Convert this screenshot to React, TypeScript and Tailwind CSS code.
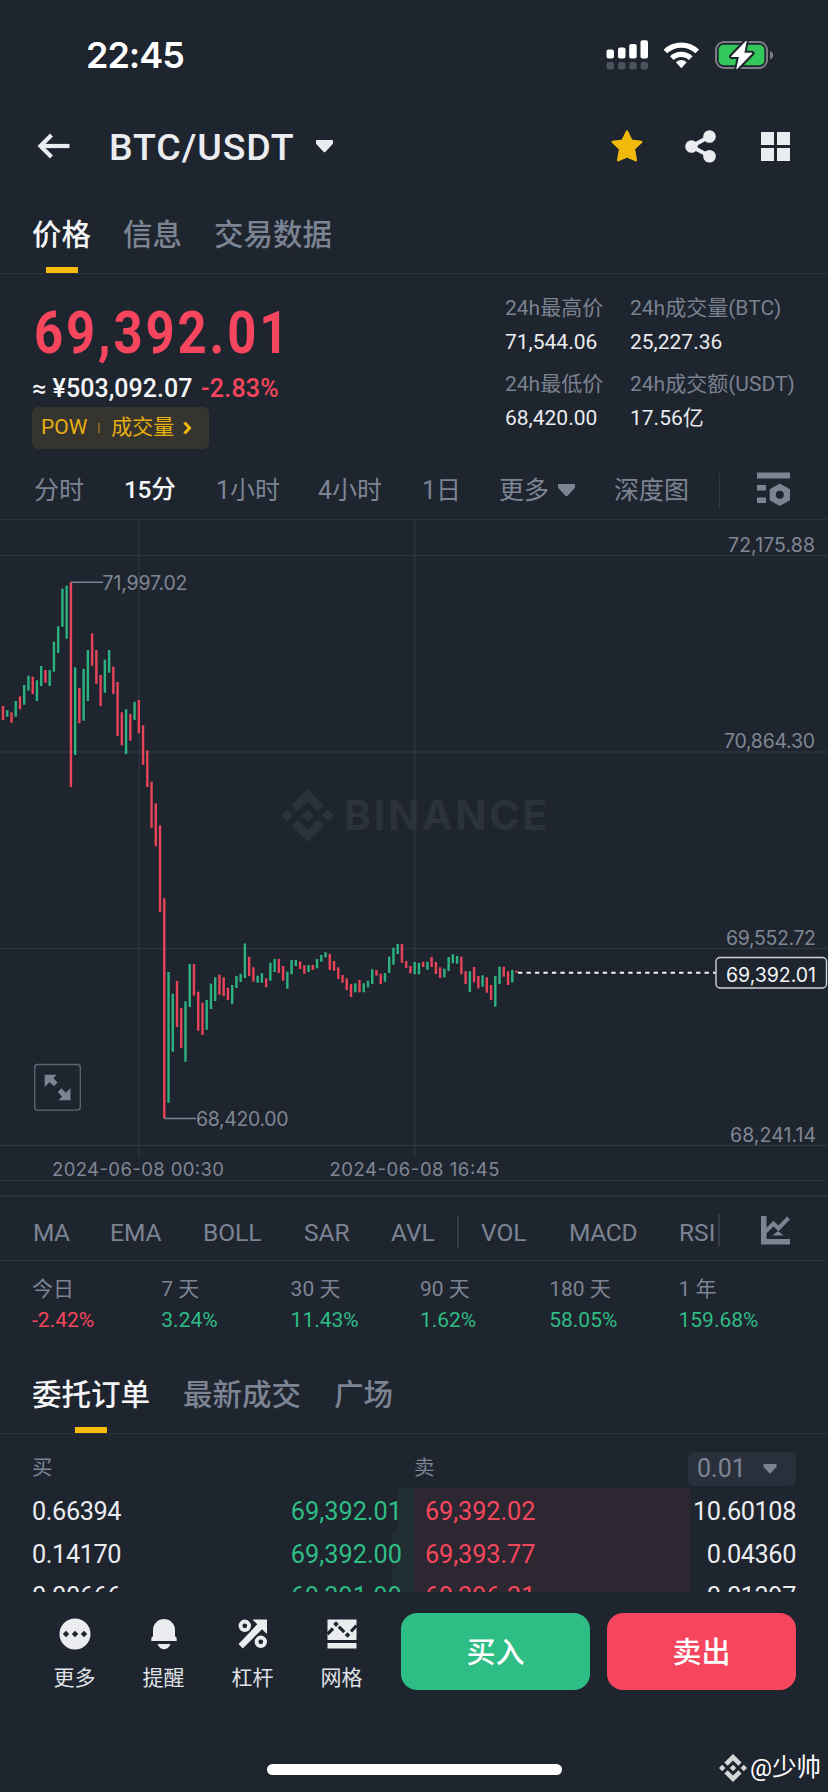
import type { ReactNode } from "react";

type Candle = ["u" | "d", number, number];

// direction, high y, low y in chart space
const candles: Candle[] = [
  ["d", 706, 720], ["u", 710.3, 716.7], ["d", 712.3, 722.7], ["u", 701, 716.7], ["d", 696.3, 709.3],
  ["u", 685, 704.7], ["u", 675.7, 690.7], ["d", 676.7, 694], ["u", 680.3, 701], ["u", 666, 686],
  ["d", 670, 682.7], ["u", 670, 686], ["u", 641.7, 671.7], ["u", 626.3, 653], ["u", 588.7, 626.7],
  ["u", 585.7, 638.7], ["d", 582, 787], ["u", 667.3, 755], ["d", 688, 723.3], ["u", 669, 720.7],
  ["u", 650, 701], ["d", 633.3, 665.7], ["d", 650, 684], ["d", 675, 706], ["u", 659.7, 692.7],
  ["u", 650, 672.7], ["d", 666.7, 694], ["d", 682, 736], ["d", 712.3, 745.3], ["u", 709.3, 754],
  ["d", 714, 740.7], ["u", 701.7, 720], ["d", 700, 733.3], ["d", 725.3, 764.7], ["d", 750.3, 787],
  ["d", 781.7, 828], ["d", 803.3, 846.3], ["d", 825.3, 911.7], ["d", 898.3, 1118.5], ["u", 972, 1102.7],
  ["u", 993.7, 1051.7], ["d", 981, 1027], ["d", 1008, 1048], ["u", 1001.3, 1061.7], ["u", 964, 1007],
  ["d", 964, 995.7], ["d", 991.7, 1030.7], ["d", 1002.7, 1035], ["u", 1000, 1029.7], ["u", 983.7, 1009],
  ["u", 977.3, 1001], ["d", 974.7, 994.7], ["d", 977.3, 996], ["d", 987.7, 1000], ["u", 985, 1004],
  ["u", 976, 988], ["u", 973.7, 982], ["u", 943.5, 978], ["d", 956.7, 976], ["d", 967.3, 981.7],
  ["u", 975.7, 982.7], ["u", 973.3, 982.7], ["d", 978.3, 987.3], ["u", 962.7, 980.7], ["u", 959, 972],
  ["d", 959, 973], ["d", 966, 980.7], ["u", 971.7, 988.7], ["u", 960, 974.3], ["u", 960, 966],
  ["d", 961.3, 969], ["d", 965.3, 973.7], ["u", 965, 972], ["d", 965, 970], ["u", 959, 968.3],
  ["u", 955, 961.7], ["u", 952.3, 957.3], ["d", 954, 970], ["d", 961, 970.7], ["d", 967.3, 979],
  ["d", 975, 982.7], ["d", 978.3, 990], ["d", 984, 997], ["u", 983.3, 992.3], ["d", 980, 992.3],
  ["u", 983.3, 992.3], ["u", 980.7, 987.3], ["u", 969.3, 984], ["d", 970, 975.7], ["d", 973.7, 984],
  ["u", 973, 981.7], ["u", 956.7, 973], ["u", 947.7, 964.7], ["u", 944, 954], ["d", 944, 962.7],
  ["d", 961, 968], ["d", 966, 973.3], ["u", 962, 974.3], ["u", 963, 974.3], ["d", 961.7, 967],
  ["u", 961.7, 969.7], ["d", 957, 967], ["d", 962, 974], ["d", 967.3, 978], ["u", 968.7, 977.3],
  ["u", 957, 971], ["u", 954.3, 963.3], ["u", 956, 963.7], ["d", 956.7, 974.3], ["d", 971.3, 984],
  ["u", 971.3, 992], ["d", 967, 982.3], ["d", 976, 988.3], ["u", 975.3, 986.7], ["d", 977.3, 992.7],
  ["d", 985, 1000], ["u", 976, 1006.7], ["u", 966.7, 984], ["d", 966.7, 976.7], ["d", 971.3, 985],
  ["u", 970, 982.3], ["d", 970.7, 972.7],
];

const stats = [
  ["24h最高价", "71,544.06", "24h成交量(BTC)", "25,227.36"],
  ["24h最低价", "68,420.00", "24h成交额(USDT)", "17.56亿"],
];

const performance = [
  { label: "今日", value: "-2.42%" },
  { label: "7 天", value: "3.24%" },
  { label: "30 天", value: "11.43%" },
  { label: "90 天", value: "1.62%" },
  { label: "180 天", value: "58.05%" },
  { label: "1 年", value: "159.68%" },
];

const orders = [
  { bidQty: "0.66394", bid: "69,392.01", ask: "69,392.02", askQty: "10.60108" },
  { bidQty: "0.14170", bid: "69,392.00", ask: "69,393.77", askQty: "0.04360" },
  { bidQty: "0.00666", bid: "69,391.99", ask: "69,396.31", askQty: "0.01397" },
];

function Caret({ className }: { className: string }) {
  return (
    <svg viewBox="0 0 17 13" className={className} aria-hidden>
      <path d="M.8 0h15.4q.8 0 .8.8v2.4q0 .6-.5 1L9.3 12q-.8.7-1.6 0L.5 4.2Q0 3.8 0 3.2V.8Q0 0 .8 0Z" fill="currentColor" />
    </svg>
  );
}

function BinanceMark({ className }: { className: string }) {
  return (
    <svg viewBox="0 0 52 52" className={className} fill="currentColor" aria-hidden>
      <path d="M26 0 42 16l-6 6-10-10-10 10-6-6Z" />
      <path d="M26 52 10 36l6-6 10 10 10-10 6 6Z" />
      <path d="m26 20 6 6-6 6-6-6ZM6 20l6 6-6 6-6-6ZM46 20l6 6-6 6-6-6Z" />
    </svg>
  );
}

function StatusBar() {
  return (
    <div className="flex h-[100px] items-start justify-between pl-[86px] pr-[54px] text-white">
      <span className="mt-[33px] font-['Inter'] text-[36px] leading-[44px] font-semibold tracking-[-1px]">
        22:45
      </span>
      <svg width="168" height="30" viewBox="605 40 168 30" className="mt-10" aria-hidden>
        <g fill="#fff">
          <rect x="605.5" y="49.5" width="7.5" height="9" rx="2" />
          <rect x="617" y="47.5" width="7.5" height="11" rx="2" />
          <rect x="628.2" y="44" width="7.5" height="14.5" rx="2" />
          <rect x="639.5" y="40.2" width="7.5" height="18.3" rx="2" />
        </g>
        <g fill="#4d535c">
          <rect x="605.5" y="62" width="7.5" height="7.5" rx="2.5" />
          <rect x="617" y="62" width="7.5" height="7.5" rx="2.5" />
          <rect x="628.2" y="62" width="7.5" height="7.5" rx="2.5" />
          <rect x="639.5" y="62" width="7.5" height="7.5" rx="2.5" />
        </g>
        <g stroke="#fff" strokeWidth="5.2" fill="none">
          <path d="M664.4 51.5A22.8 22.8 0 0 1 696.2 51.5" />
          <path d="M670.8 58.2A13.6 13.6 0 0 1 689.8 58.2" />
        </g>
        <path d="M680.3 68.3 674.9 62.3Q680.3 57.8 685.7 62.3Z" fill="#fff" />
        <rect x="715" y="42" width="51" height="26" rx="8" fill="none" stroke="#7b7c85" strokeWidth="2" />
        <path d="M769 51v8.5q3.2-1.2 3.2-4.25T769 51Z" fill="#7b7c85" />
        <rect x="717.7" y="44.7" width="45.6" height="20.6" rx="5" fill="#34c759" />
        <path
          d="M745.2 41.2 730.5 56.5H738.5L735.8 68.8 751 53.2H742.8Z"
          fill="#fff"
          stroke="#1f252f"
          strokeWidth="5"
          strokeLinejoin="round"
        />
        <path
          d="M745.2 41.2 730.5 56.5H738.5L735.8 68.8 751 53.2H742.8Z"
          fill="#fff"
          stroke="#fff"
          strokeWidth="1"
          strokeLinejoin="round"
        />
      </svg>
    </div>
  );
}

function Header() {
  return (
    <header className="flex h-[92px] items-center pl-[37px] pr-[38px] text-[#eaecef]">
      <svg width="33" height="26" viewBox="0 0 33 26" className="mr-[39px]" fill="none" stroke="currentColor" aria-hidden>
        <path d="M4 13h28.5" strokeWidth="4.2" />
        <path d="M14.5 2 3.5 13l11 11" strokeWidth="4.2" />
      </svg>
      <h1 className="mt-0.5 w-[207px] whitespace-nowrap text-[37.5px] font-medium tracking-[0.9px]">BTC/USDT</h1>
      <Caret className="h-[13px] w-[17px]" />
      <svg width="34" height="34" viewBox="0 0 34 34" className="ml-auto" aria-hidden>
        <path
          d="m17 2.5 4.3 9.1 10 1.3-7.4 6.9 1.9 11.4L17 27.3l-8.8 3.9 1.9-11.4-7.4-6.9 10-1.3Z"
          fill="#f0b90b"
          stroke="#f0b90b"
          strokeWidth="2.4"
          strokeLinejoin="round"
        />
      </svg>
      <svg width="31" height="33" viewBox="0 0 31 33" className="ml-[41px]" aria-hidden>
        <path d="M24.5 6.5 6.5 16.5l18 9.5" fill="none" stroke="currentColor" strokeWidth="4" />
        <circle cx="24.5" cy="6.5" r="6.3" fill="currentColor" />
        <circle cx="6.5" cy="16.5" r="6.3" fill="currentColor" />
        <circle cx="24.5" cy="26.3" r="6.3" fill="currentColor" />
      </svg>
      <div className="ml-[45px] grid grid-cols-2 gap-[3px]">
        <i className="size-[13px] bg-current" />
        <i className="size-[13px] bg-current" />
        <i className="size-[13px] bg-current" />
        <i className="size-[13px] bg-current" />
      </div>
    </header>
  );
}

function TabItem({ children, active }: { children: ReactNode; active?: boolean }) {
  return (
    <div className={active ? "relative h-full text-[#f4f5f7]" : "h-full text-[#7c8493]"}>
      {children}
      {active && <i className="absolute bottom-0 left-1/2 h-1.5 w-8 -translate-x-1/2 bg-[#f8bc0b]" />}
    </div>
  );
}

function Ticker() {
  return (
    <section className="flex h-[188px] justify-between pl-8 pr-[32px]">
      <div>
        <div className="ml-0.5 mt-[21px] h-[77px] origin-left scale-x-[0.86] whitespace-nowrap text-[59px] leading-[76px] font-bold tracking-[3.4px] text-[#f6465d]">
          69,392.01
        </div>
        <div className="flex h-[34px] items-center whitespace-nowrap text-[25px] font-medium">
          <span className="w-[169px] tracking-[0.05px] text-[#f4f5f7]">≈ ¥503,092.07</span>
          <span className="tracking-[0.25px] text-[#f6465d]">-2.83%</span>
        </div>
        <div className="mt-px flex h-[42px] w-[177px] items-center rounded-md bg-[#36342e] pl-[9px] text-[21px] text-[#e5b010]">
          <span>POW</span>
          <i className="ml-[11px] h-2.5 w-0.5 bg-[#7a6420]" />
          <span className="ml-[11px]">成交量</span>
          <svg width="9" height="14" viewBox="0 0 9 14" className="ml-[9px]" fill="none" stroke="#f0b90b" strokeWidth="3" aria-hidden>
            <path d="m1.500 1.500 5 5.500-5 5.500" />
          </svg>
        </div>
      </div>
      <div className="mt-[17px] w-[291px] text-[21px]">
        {stats.map(([label, value, label2, value2]) => (
          <div key={label} className="grid h-[76px] grid-cols-[125px_1fr] content-start whitespace-nowrap leading-[34px]">
            <span className="text-[#7a818f]">{label}</span>
            <span className="text-[#7a818f]">{label2}</span>
            <span className="text-[#eaecef]">{value}</span>
            <span className="text-[#eaecef]">{value2}</span>
          </div>
        ))}
      </div>
    </section>
  );
}

function IntervalBar() {
  return (
    <nav className="flex h-[58px] items-center whitespace-nowrap border-b border-[#2b323c] pl-[34px] text-[25px] text-[#7c8493]">
      <span className="w-[90px]">分时</span>
      <span className="w-[92px] text-[24.5px] font-medium tracking-[-0.3px] text-[#f4f5f7]">15分</span>
      <span className="w-[102px]">1小时</span>
      <span className="w-[104px]">4小时</span>
      <span className="w-[77px]">1日</span>
      <span className="w-[59px]">更多</span>
      <Caret className="h-[13px] w-[17px]" />
      <span className="ml-[39px] w-[105px]">深度图</span>
      <i className="h-[35px] w-px bg-[#2f3641]" />
      <svg width="33" height="34" viewBox="0 0 33 34" className="-mt-[3px] ml-[37px]" fill="currentColor" aria-hidden>
        <path d="M0 .5h33v6H0ZM0 13h9v5.500H0ZM0 25.500h9v5.500H0Z" />
        <path fillRule="evenodd" d="M22.800 11.500 33 17.300v10.900L22.800 34 12.700 28.200V17.300ZM22.800 18.800a4 4 0 1 0 0 8 4 4 0 0 0 0-8Z" />
      </svg>
    </nav>
  );
}

function PriceChart() {
  return (
    <div className="relative h-[661px] border-b border-[#2b323c]">
      <div className="absolute left-[281px] top-[269px] flex items-center text-[#2b323c]">
        <BinanceMark className="size-[53px]" />
        <span className="ml-[10px] font-['Inter'] text-[41px] leading-[53px] font-bold tracking-[2.7px]">BINANCE</span>
      </div>
      <svg width="828" height="660" viewBox="0 520 828 660" className="relative block font-['Inter'] text-[19.5px]">
        <g stroke="#353c47" strokeOpacity=".7" strokeWidth="1.3">
          <path d="M0 555.5H828M0 752H828M0 948.5H828M0 1145.3H828" />
          <path d="M139 520V1156M414.7 520V1156" />
        </g>
        {candles.map(([dir, high, low], i) => (
          <rect
            key={i}
            x={3 + i * 4.244 - 1.2}
            y={high}
            width="2.4"
            height={low - high}
            fill={dir === "u" ? "#2ebd85" : "#f6465d"}
            opacity=".93"
          />
        ))}
        <path d="M71 582.3H103M164.5 1118.5H196" stroke="#7c8493" strokeWidth="1.5" />
        <path d="M518 972.7H716" stroke="#f4f5f7" strokeWidth="2" strokeDasharray="4.3 4.18" />
        <g fill="#7f8694">
          <text x="102.5" y="589.5" textLength="85">71,997.02</text>
          <text x="196" y="1125.5" textLength="92.500">68,420.00</text>
          <text x="815" y="551.5" textAnchor="end" textLength="87">72,175.88</text>
          <text x="815" y="748" textAnchor="end" textLength="91">70,864.30</text>
          <text x="816" y="944.5" textAnchor="end" textLength="90">69,552.72</text>
          <text x="816" y="1141.5" textAnchor="end" textLength="86">68,241.14</text>
          <text x="52" y="1175.5" fontSize="18.5" textLength="172">2024-06-08 00:30</text>
          <text x="329.5" y="1175.5" fontSize="18.5" textLength="170">2024-06-08 16:45</text>
        </g>
        <rect x="716" y="957.5" width="110.5" height="30.5" rx="4" fill="#1f252f" stroke="#cfd2d8" strokeWidth="1.4" />
        <text x="816" y="982" textAnchor="end" textLength="90" fill="#f4f5f7">69,392.01</text>
        <rect x="34.7" y="1064.5" width="45.6" height="45.6" rx="3" fill="none" stroke="#5f6775" strokeWidth="1.3" />
        <g fill="#7c8493">
          <path d="M44.7 1074.7H56.5L53.5 1078.3 57.5 1082.6 54 1086.2 49.5 1082.3 44.7 1087Z" />
          <path d="M70.5 1100.3H58.3L62 1096.8 57.8 1092 61.3 1088.3 65.8 1092.8 70.5 1088Z" />
        </g>
      </svg>
    </div>
  );
}

function Indicators() {
  return (
    <nav className="mt-[14px] flex h-[66px] items-center whitespace-nowrap border-b border-t-2 border-[#2b323c] pl-[33px] pt-[10px] text-[24.5px] text-[#7c8493]">
      <span className="w-[77px] tracking-[-0.5px]">MA</span>
      <span className="w-[93px]">EMA</span>
      <span className="w-[101px]">BOLL</span>
      <span className="w-[87px]">SAR</span>
      <span className="w-[66px]">AVL</span>
      <i className="-mt-1 mr-[22px] h-8 w-0.5 bg-[#353c47]" />
      <span className="w-[88px]">VOL</span>
      <span className="w-[110px] tracking-[-0.3px]">MACD</span>
      <span className="w-[39px]">RSI</span>
      <i className="-mt-2 h-8 w-0.5 bg-[#353c47]" />
      <svg width="29" height="29" viewBox="0 0 29 29" className="-mt-1.5 ml-[41px]" aria-hidden>
        <path d="M0 0h5.500v23H29v5.500H0Z" fill="currentColor" />
        <path d="M4 16 12.500 7.500l5 5L27.500 2" fill="none" stroke="currentColor" strokeWidth="4" />
        <path d="m17 15 5.500 4.500h-11Z" fill="currentColor" />
      </svg>
    </nav>
  );
}

function OrderBook() {
  return (
    <section className="h-[158px] overflow-hidden">
      <div className="flex h-[54px] items-center pl-8 pr-8 pt-[15px] text-[20.5px] text-[#7c8493]">
        <span className="w-[382px]">买</span>
        <span>卖</span>
        <div className="ml-auto flex h-[34px] w-[108px] items-center justify-between rounded-md bg-[#29303b] pl-[9px] pr-[19px] text-[25px]">
          0.01
          <Caret className="h-2.5 w-3.5" />
        </div>
      </div>
      {orders.map((o, i) => (
        <div key={o.bid} className="flex h-[42.5px] text-[25.3px] leading-[48px]">
          <div className="relative flex w-[414px] justify-between pl-8 pr-[12px]">
            <i className={i === 0 ? "absolute inset-y-0 right-0 w-[17px] bg-[#202e33]" : "absolute inset-y-0 right-0 w-[22px] bg-[#202e33]"} />
            <span className="tracking-[-0.4px] text-[#eaecef]">{o.bidQty}</span>
            <span className="relative text-[#2ebd85]">{o.bid}</span>
          </div>
          <div className="relative flex flex-1 justify-between pl-[11px] pr-8">
            <i className="absolute inset-y-0 left-0 w-[276px] bg-[#2d2732]" />
            <span className="relative tracking-[-0.1px] text-[#f6465d]">{o.ask}</span>
            <span className="relative tracking-[-0.4px] text-[#eaecef]">{o.askQty}</span>
          </div>
        </div>
      ))}
    </section>
  );
}

function Action({ label, children }: { label: string; children: ReactNode }) {
  return (
    <div className="flex w-[89px] flex-col items-center">
      <svg width="32" height="32" viewBox="0 0 32 32" fill="#eaecef" aria-hidden>
        {children}
      </svg>
      <span className="mt-[11px] text-[21px] leading-[34px] text-[#dfe1e6]">{label}</span>
    </div>
  );
}

function BottomBar() {
  return (
    <footer className="relative h-[200px]">
      <div className="flex items-start pl-[30px] pt-[21px] pr-8">
        <div className="mt-[5px] flex w-[371px]">
          <Action label="更多">
            <circle cx="16" cy="16" r="15.5" />
            <g fill="#1f252f">
              <path d="m7 12.8 3.2 3.2L7 19.2 3.8 16ZM16 12.8l3.2 3.2-3.2 3.2-3.2-3.2ZM25 12.8l3.2 3.2-3.2 3.2-3.2-3.2Z" />
            </g>
          </Action>
          <Action label="提醒">
            <path d="M5 18V12a11 11 0 0 1 22 0v6l1.7 2v3H3.3v-3ZM9.5 26h13q-2 5.2-6.5 5.2T9.5 26Z" />
          </Action>
          <Action label="杠杆">
            <path d="M15.5 1.5H30V16l-5-4.7L5.8 30.5 1.5 26 20.3 6.3Z" />
            <circle cx="7.8" cy="7.8" r="4.3" fill="none" stroke="#eaecef" strokeWidth="3.8" />
            <circle cx="23.8" cy="23.8" r="7.8" fill="#1f252f" />
            <circle cx="23.8" cy="23.8" r="4.3" fill="none" stroke="#eaecef" strokeWidth="3.8" />
          </Action>
          <Action label="网格">
            <path d="M1.5 1.5h29v20.5h-29ZM1.5 25h29v5.5h-29Z" />
            <path d="M1.5 16 7 10.5M25 13.5 30.5 7.5M12.8 8.7 18.3 14.2" fill="none" stroke="#1f252f" strokeWidth="3.2" />
            <path d="m10 3.3 2.8 2.8L10 8.9 7.200 6.100ZM21.500 14.200l2.800 2.800-2.800 2.800-2.800-2.800Z" fill="#1f252f" />
          </Action>
        </div>
        <button type="button" className="h-[77px] w-[189px] rounded-2xl bg-[#2ebd85] pt-1 text-[29px] font-medium text-white">
          买入
        </button>
        <button type="button" className="ml-[17px] h-[77px] w-[189px] rounded-2xl bg-[#f6465d] pt-1 text-[29px] font-medium text-white">
          卖出
        </button>
      </div>
      <i className="absolute left-[267px] top-[172px] h-[11px] w-[295px] rounded-full bg-white" />
      <div className="absolute right-[7px] top-[158px] flex items-center text-[24.5px] text-white">
        <BinanceMark className="mr-[3px] size-7 text-[#d5d6d8]" />
        @少帅
      </div>
    </footer>
  );
}

export default function App() {
  return (
    <div className="h-[1792px] w-[828px] overflow-hidden bg-[#1f252f] font-['Roboto','Noto_Sans_CJK_SC',sans-serif]">
      <StatusBar />
      <Header />
      <div className="flex h-[82px] gap-8 border-b border-[#2b323c] pl-8 text-[29.5px] leading-[86px] font-medium">
        <TabItem active>价格</TabItem>
        <TabItem>信息</TabItem>
        <TabItem>交易数据</TabItem>
      </div>
      <Ticker />
      <IntervalBar />
      <PriceChart />
      <Indicators />
      <div className="flex h-[96px] whitespace-nowrap pl-8 pt-[13px] text-[21px] leading-[31px]">
        {performance.map((p) => (
          <div key={p.label} className="w-[129.3px] shrink-0">
            <div className="text-[#7c8493]">{p.label}</div>
            <div className={p.value.startsWith("-") ? "text-[#f6465d]" : "text-[#2ebd85]"}>{p.value}</div>
          </div>
        ))}
      </div>
      <div className="flex h-[77px] gap-[33px] border-b border-[#2b323c] pl-8 text-[29.5px] leading-[76px] font-medium">
        <TabItem active>委托订单</TabItem>
        <TabItem>最新成交</TabItem>
        <TabItem>广场</TabItem>
      </div>
      <OrderBook />
      <BottomBar />
    </div>
  );
}
